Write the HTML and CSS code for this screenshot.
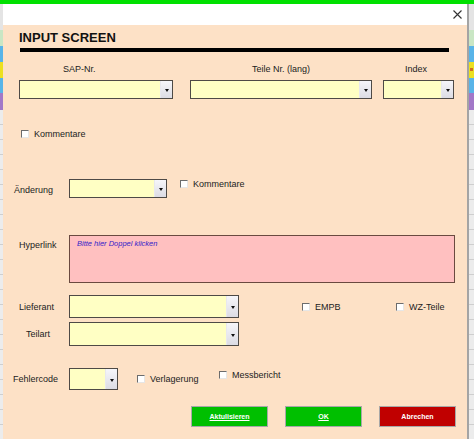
FILE: index.html
```html
<!DOCTYPE html>
<html lang="de">
<head>
    <meta charset="UTF-8">
    <meta name="viewport" content="width=device-width, initial-scale=1.0">
    <title>INPUT SCREEN</title>
    <link rel="stylesheet" href="styles.css">
</head>
<body>

    <div class="topbar"></div>

    <div class="desk">
        <!-- Tabelle links -->
        <div class="strip strip-left">
            <div class="band b-gray"></div>
            <div class="band b-lgreen"></div>
            <div class="band b-blue"></div>
            <div class="band b-yellow"></div>
            <div class="band b-blue2"></div>
            <div class="band b-purple"></div>
            <div class="cells"></div>
        </div>

        <!-- Formular -->
        <div class="dialog">
            <div class="titlebar">
                <svg class="close" width="9" height="9" viewBox="0 0 9 9">
                    <path d="M0.5 0.5 L8.5 8.5 M8.5 0.5 L0.5 8.5" stroke="#333" stroke-width="1.1" fill="none"/>
                </svg>
            </div>

            <div class="form">
                <h1>INPUT SCREEN</h1>
                <div class="rule"></div>

                <div class="row caps">
                    <div class="cap cap-sap">SAP-Nr.</div>
                    <div class="cap cap-teile">Teile Nr. (lang)</div>
                    <div class="cap cap-index">Index</div>
                </div>

                <div class="row top-combos">
                    <div class="combo c-sap"><span class="drop"></span></div>
                    <div class="combo c-teile"><span class="drop"></span></div>
                    <div class="combo c-index"><span class="drop"></span></div>
                </div>

                <div class="row r-komm">
                    <label class="chk"><span class="box"></span>Kommentare</label>
                </div>

                <div class="row r-aend">
                    <div class="lbl lbl-aend">Änderung</div>
                    <div class="combo c-aend"><span class="drop"></span></div>
                    <label class="chk chk-aend"><span class="box"></span>Kommentare</label>
                </div>

                <div class="row r-hyper">
                    <div class="lbl lbl-hyper">Hyperlink</div>
                    <div class="linkbox">Bitte hier Doppel klicken</div>
                </div>

                <div class="row r-lief">
                    <div class="lbl lbl-lief">Lieferant</div>
                    <div class="combo c-wide"><span class="drop"></span></div>
                    <label class="chk chk-empb"><span class="box"></span>EMPB</label>
                    <label class="chk"><span class="box"></span>WZ-Teile</label>
                </div>

                <div class="row r-teil">
                    <div class="lbl lbl-teil">Teilart</div>
                    <div class="combo c-wide"><span class="drop"></span></div>
                </div>

                <div class="row r-fehler">
                    <div class="lbl lbl-fehler">Fehlercode</div>
                    <div class="combo c-fehler"><span class="drop"></span></div>
                    <label class="chk chk-verl"><span class="box"></span>Verlagerung</label>
                    <label class="chk chk-mess"><span class="box"></span>Messbericht</label>
                </div>

                <div class="row r-buttons">
                    <button class="btn btn-green"><u>Aktulisieren</u></button>
                    <button class="btn btn-green"><u>OK</u></button>
                    <button class="btn btn-red">Abrechen</button>
                </div>
            </div>
        </div>

        <!-- Tabelle rechts -->
        <div class="strip strip-right">
            <div class="band b-gray"></div>
            <div class="band b-lgreen"></div>
            <div class="band b-blue"></div>
            <div class="band b-yellow"><span class="mark"></span></div>
            <div class="band b-blue2"></div>
            <div class="band b-purple"></div>
            <div class="cells"></div>
        </div>
    </div>

</body>
</html>
```

FILE: styles.css
```css
html, body {
    margin: 0;
    padding: 0;
}
body {
    width: 474px;
    height: 439px;
    overflow: hidden;
    background: #ececec;
    font-family: "Liberation Sans", Arial, sans-serif;
    font-size: 9px;
    color: #222;
}
.topbar {
    height: 4px;
    background: #00e000;
}
.desk {
    display: flex;
    height: 435px;
}

/* Tabelle im Hintergrund */
.strip {
    display: flex;
    flex-direction: column;
}
.strip-left {
    width: 3px;
}
.strip-right {
    flex: 1;
    border-left: 2px solid #a4a4a4;
}
.band {
    height: 16px;
}
.b-gray {
    height: 26px;
    background: #e4e4e4;
}
.b-lgreen {
    background: #c9e6c4;
}
.b-blue {
    background: #58b4e8;
}
.b-yellow {
    background: #ece020;
    position: relative;
}
.b-yellow .mark {
    position: absolute;
    left: 1px;
    top: 6px;
    width: 3px;
    height: 3px;
    background: #d07020;
}
.b-blue2 {
    height: 15px;
    background: #58b4e8;
}
.b-purple {
    height: 17px;
    background: #a278c8;
}
.cells {
    flex: 1;
    background: repeating-linear-gradient(to bottom, #ececec 0px, #ececec 14px, #cfcfcf 14px, #cfcfcf 15px);
}

/* Formular */
.dialog {
    width: 464px;
    display: flex;
    flex-direction: column;
}
.titlebar {
    height: 21px;
    background: #fff;
    display: flex;
    justify-content: flex-end;
    align-items: center;
    padding-right: 5px;
}
.form {
    flex: 1;
    background: #fde1c6;
    display: flex;
    flex-direction: column;
}
h1 {
    margin: 5px 0 0 16px;
    height: 15px;
    line-height: 15px;
    font-size: 13px;
    font-weight: bold;
    color: #111;
}
.rule {
    margin: 3px 0 0 17px;
    width: 429px;
    height: 4px;
    background: #000;
}
.row {
    display: flex;
    align-items: center;
}
.caps {
    margin-top: 12px;
    height: 10px;
    line-height: 10px;
    margin-left: 16px;
}
.cap {
    box-sizing: border-box;
    white-space: nowrap;
}
.cap-sap {
    width: 154px;
    padding-left: 44px;
}
.cap-teile {
    width: 182px;
    margin-left: 17px;
    padding-left: 62px;
}
.cap-index {
    width: 71px;
    margin-left: 11px;
    padding-left: 22px;
}

.combo {
    box-sizing: border-box;
    height: 100%;
    background: #ffffc4;
    border: 1px solid #4e4a46;
    display: flex;
    justify-content: flex-end;
}
.drop {
    width: 11px;
    background: linear-gradient(to bottom, #f6f6fa, #dcdce4);
    border-left: 1px solid #e8e8ee;
    display: flex;
    align-items: center;
    justify-content: center;
}
.drop::after {
    content: "";
    margin-top: 2px;
    border-left: 2.5px solid transparent;
    border-right: 2.5px solid transparent;
    border-top: 3px solid #111;
}
.top-combos {
    margin-top: 6px;
    height: 19px;
    margin-left: 16px;
}
.c-sap {
    width: 154px;
}
.c-teile {
    width: 182px;
    margin-left: 17px;
}
.c-index {
    width: 71px;
    margin-left: 11px;
}

.chk {
    display: flex;
    align-items: center;
    gap: 5px;
    height: 10px;
    line-height: 10px;
    white-space: nowrap;
}
.box {
    box-sizing: border-box;
    width: 8px;
    height: 8px;
    background: #fff;
    border-top: 1px solid #6c6c6c;
    border-left: 1px solid #6c6c6c;
    border-right: 1px solid #e6e6e6;
    border-bottom: 1px solid #e6e6e6;
}

.lbl {
    box-sizing: border-box;
    width: 66px;
    line-height: 10px;
    white-space: nowrap;
}
.lbl-aend {
    padding-left: 11px;
    margin-top: 3px;
}
.lbl-hyper {
    padding-left: 16px;
    align-self: flex-start;
    margin-top: 5px;
}
.lbl-lief {
    padding-left: 16px;
}
.lbl-teil {
    padding-left: 23px;
}
.lbl-fehler {
    padding-left: 10px;
}

.r-komm {
    margin-top: 30px;
    height: 10px;
    margin-left: 18px;
}
.r-aend {
    margin-top: 40px;
    height: 19px;
}
.c-aend {
    width: 98px;
}
.chk-aend {
    align-self: flex-start;
    margin-left: 13px;
}

.r-hyper {
    margin-top: 37px;
    height: 48px;
}
.linkbox {
    box-sizing: border-box;
    width: 386px;
    height: 48px;
    background: #ffc0c0;
    border: 1px solid #6a4a40;
    padding: 3px 7px;
    font-size: 7.5px;
    line-height: 10px;
    font-style: italic;
    color: #3322c8;
}

.r-lief {
    margin-top: 12px;
    height: 23px;
}
.c-wide {
    width: 170px;
}
.chk-empb {
    margin-left: 63px;
    width: 94px;
}
.r-teil {
    margin-top: 4px;
    height: 24px;
}

.r-fehler {
    margin-top: 22px;
    height: 22px;
}
.c-fehler {
    width: 49px;
}
.chk-verl {
    margin-left: 19px;
    width: 82px;
}
.chk-mess {
    align-self: flex-start;
    margin-top: 2px;
}

.r-buttons {
    margin-top: 16px;
    height: 21px;
    margin-left: 188px;
    gap: 17px;
}
.btn {
    box-sizing: border-box;
    width: 77px;
    height: 21px;
    border: 1px solid #a8a8a8;
    color: #fff;
    font-family: "Liberation Sans", Arial, sans-serif;
    font-size: 7px;
    font-weight: bold;
    padding: 0;
    cursor: pointer;
}
.btn-green {
    background: #00bf00;
}
.btn-red {
    background: #c00000;
}
```
